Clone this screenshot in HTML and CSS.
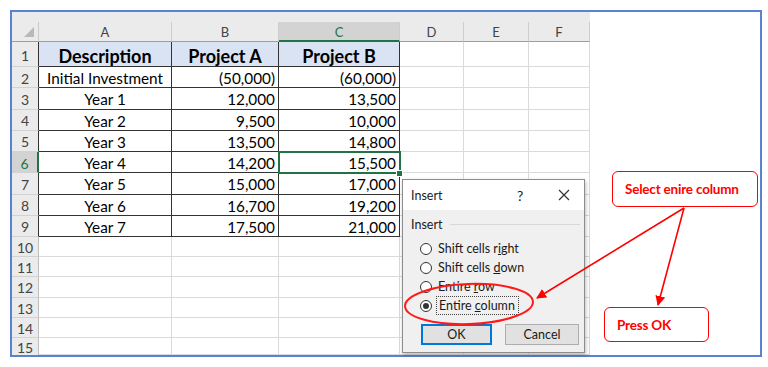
FILE: index.html
```html
<!DOCTYPE html>
<html>
<head>
<meta charset="utf-8">
<link rel="stylesheet" href="styles.css">
</head>
<body>
<div class="frame">
  <div class="sheet">
    <div class="strip"></div>
    <div class="corner"><svg width="14" height="14" viewBox="0 0 14 14"><polygon points="2,12 12,12 12,2" fill="#b9b9b9"/></svg></div>
    <div class="ch">A</div><div class="ch">B</div><div class="ch csel">C</div><div class="ch">D</div><div class="ch">E</div><div class="ch">F</div>

    <div class="rh t">1</div><div class="d h">Description</div><div class="d h">Project A</div><div class="d h">Project B</div><div class="c"></div><div class="c"></div><div class="c"></div>
    <div class="rh t">2</div><div class="d">Initial Investment</div><div class="d r">(50,000)</div><div class="d r">(60,000)</div><div class="c"></div><div class="c"></div><div class="c"></div>
    <div class="rh t">3</div><div class="d">Year 1</div><div class="d r">12,000</div><div class="d r">13,500</div><div class="c"></div><div class="c"></div><div class="c"></div>
    <div class="rh t">4</div><div class="d">Year 2</div><div class="d r">9,500</div><div class="d r">10,000</div><div class="c"></div><div class="c"></div><div class="c"></div>
    <div class="rh t">5</div><div class="d">Year 3</div><div class="d r">13,500</div><div class="d r">14,800</div><div class="c"></div><div class="c"></div><div class="c"></div>
    <div class="rh t rsel">6</div><div class="d">Year 4</div><div class="d r">14,200</div><div class="d r">15,500</div><div class="c"></div><div class="c"></div><div class="c"></div>
    <div class="rh t">7</div><div class="d">Year 5</div><div class="d r">15,000</div><div class="d r">17,000</div><div class="c"></div><div class="c"></div><div class="c"></div>
    <div class="rh t">8</div><div class="d">Year 6</div><div class="d r">16,700</div><div class="d r">19,200</div><div class="c"></div><div class="c"></div><div class="c"></div>
    <div class="rh t">9</div><div class="d">Year 7</div><div class="d r">17,500</div><div class="d r">21,000</div><div class="c"></div><div class="c"></div><div class="c"></div>
    <div class="rh">10</div><div class="c"></div><div class="c"></div><div class="c"></div><div class="c"></div><div class="c"></div><div class="c"></div>
    <div class="rh">11</div><div class="c"></div><div class="c"></div><div class="c"></div><div class="c"></div><div class="c"></div><div class="c"></div>
    <div class="rh">12</div><div class="c"></div><div class="c"></div><div class="c"></div><div class="c"></div><div class="c"></div><div class="c"></div>
    <div class="rh">13</div><div class="c"></div><div class="c"></div><div class="c"></div><div class="c"></div><div class="c"></div><div class="c"></div>
    <div class="rh">14</div><div class="c"></div><div class="c"></div><div class="c"></div><div class="c"></div><div class="c"></div><div class="c"></div>
    <div class="rh last">15</div><div class="c"></div><div class="c"></div><div class="c"></div><div class="c"></div><div class="c"></div><div class="c"></div>
  </div>
  <div class="blank"></div>
</div>

<div class="selbox"></div>
<div class="handle"></div>

<div class="dialog">
  <div class="titlebar">
    <span class="title">Insert</span>
    <span class="help">?</span>
    <svg class="close" width="12" height="12" viewBox="0 0 12 12"><path d="M1 1 L11 11 M11 1 L1 11" stroke="#333" stroke-width="1.2" fill="none"/></svg>
  </div>
  <div class="dbody">
    <div class="group"><span>Insert</span><i class="rule"></i></div>
    <div class="radios">
      <div class="opt"><span class="radio"></span><span>Shift cells r<u>i</u>ght</span></div>
      <div class="opt"><span class="radio"></span><span>Shift cells <u>d</u>own</span></div>
      <div class="opt"><span class="radio"></span><span>Entire <u>r</u>ow</span></div>
      <div class="opt"><span class="radio on"></span><span class="focus">Entire <u>c</u>olumn</span></div>
    </div>
    <div class="buttons">
      <div class="btn ok">OK</div>
      <div class="btn cancel">Cancel</div>
    </div>
  </div>
</div>

<div class="callout c1">Select enire column</div>
<div class="callout c2">Press OK</div>

<svg class="marks" width="768" height="367" viewBox="0 0 768 367">
  <defs>
    <marker id="ah" markerWidth="10" markerHeight="10" refX="9" refY="5" orient="auto" markerUnits="userSpaceOnUse">
      <path d="M0,0 L10,5 L0,10 z" fill="#ff0000"/>
    </marker>
  </defs>
  <ellipse cx="469" cy="304" rx="64" ry="20" fill="none" stroke="#ff1a1a" stroke-width="2" transform="rotate(-2 469 304)"/>
  <line x1="684" y1="208" x2="537" y2="298" stroke="#ff0000" stroke-width="1.6" marker-end="url(#ah)"/>
  <line x1="684" y1="208" x2="658" y2="305" stroke="#ff0000" stroke-width="1.6" marker-end="url(#ah)"/>
</svg>
</body>
</html>
```
FILE: styles.css
```css
html, body {
  margin: 0;
  padding: 0;
  background: #ffffff;
}
body {
  width: 768px;
  height: 367px;
  position: relative;
  overflow: hidden;
  font-family: Lato, "Liberation Sans", sans-serif;
}
.frame {
  margin: 10px 0 0 10px;
  width: 752px;
  height: 347px;
  box-sizing: border-box;
  border: 2px solid #5b82d0;
  display: flex;
  overflow: hidden;
}
.sheet {
  width: 578px;
  flex: none;
  display: grid;
  grid-template-columns: 27px 133px 107px 121px 64px 65px 61px;
  grid-template-rows: 10px 20px 25px repeat(8, 21.25px) repeat(5, 20.2px) 1fr;
  color: #000;
}
.blank { flex: 1; background: #fff; }
.sheet > div {
  box-sizing: border-box;
  border-right: 1px solid #dadada;
  border-bottom: 1px solid #dadada;
  display: flex;
  align-items: center;
  justify-content: center;
  overflow: hidden;
  white-space: nowrap;
}
.sheet > .strip {
  grid-column: 1 / -1;
  background: #ebebeb;
  border: none;
}
.sheet > .corner {
  background: #ebebeb;
  border-right: 1px solid #c9c9c9;
  border-bottom: 1px solid #9e9e9e;
  justify-content: flex-end;
  align-items: flex-end;
  padding: 0 2px 2px 0;
}
.corner svg { display: block; }
.sheet > .ch {
  background: #ebebeb;
  border-right: 1px solid #cdcdcd;
  border-bottom: 1px solid #9e9e9e;
  font-size: 13px;
  color: #444;
  padding-top: 1px;
}
.sheet > .ch.csel {
  background: #d3d3d3;
  color: #217346;
  border-bottom: 2px solid #217346;
}
.sheet > .rh {
  background: #ebebeb;
  border-right: 1px solid #bdbdbd;
  border-bottom: 1px solid #d2d2d2;
  font-size: 14px;
  color: #444;
  padding-top: 2px;
}
.sheet > .rh.t { border-right: 1px solid #333; }
.sheet > .rh.rsel {
  background: #d3d3d3;
  color: #217346;
  border-right: 2px solid #217346;
}
.sheet > .rh.last { border-bottom: none; }
.sheet > .d {
  border-right: 1px solid #333;
  border-bottom: 1px solid #333;
  font-size: 15.3px;
  padding-top: 2px;
}
.sheet > .d.r {
  justify-content: flex-end;
  padding-right: 3px;
}
.sheet > .d.h {
  background: #dae3f3;
  font-weight: 700;
  font-size: 18px;
  padding-top: 3px;
}
.selbox {
  position: absolute;
  left: 278px;
  top: 151px;
  width: 123px;
  height: 23px;
  box-sizing: border-box;
  border: 2px solid #217346;
}
.handle {
  position: absolute;
  left: 396px;
  top: 170px;
  width: 7px;
  height: 7px;
  box-sizing: border-box;
  background: #217346;
  border: 1px solid #fff;
}
.dialog {
  position: absolute;
  left: 402px;
  top: 179px;
  width: 183px;
  height: 174px;
  box-sizing: border-box;
  border: 1px solid #8c8c8c;
  box-shadow: 1px 2px 4px rgba(0,0,0,0.25);
  background: #f0f0f0;
  display: flex;
  flex-direction: column;
  font-family: Lato, "Noto Sans", sans-serif;
  font-size: 12.5px;
  color: #1a1a1a;
}
.titlebar {
  height: 30px;
  background: #fff;
  display: flex;
  align-items: center;
  padding-left: 8px;
  flex: none;
}
.title { width: 105px; }
.help { width: 40px; font-size: 14px; padding-left: 1px; }
.close { margin-left: 1px; }
.dbody {
  padding: 4px 4px 0 8px;
  display: flex;
  flex-direction: column;
}
.group {
  height: 20px;
  display: flex;
  align-items: center;
}
.rule {
  flex: 1;
  height: 1px;
  background: #d8d8d8;
  margin-left: 8px;
}
.radios {
  padding: 5px 0 0 9px;
  display: flex;
  flex-direction: column;
}
.opt {
  height: 19px;
  display: flex;
  align-items: center;
  gap: 6px;
}
.radio {
  width: 12px;
  height: 12px;
  box-sizing: border-box;
  border: 1px solid #333;
  border-radius: 50%;
  background: #fff;
  display: flex;
  align-items: center;
  justify-content: center;
}
.radio.on::after {
  content: "";
  width: 6px;
  height: 6px;
  border-radius: 50%;
  background: #333;
}
.focus {
  outline: 1px dotted #444;
  outline-offset: 1px;
  padding: 0 2px 0 1px;
}
.buttons {
  display: flex;
  gap: 13px;
  margin: 9px 0 0 10px;
}
.btn {
  height: 21px;
  box-sizing: border-box;
  background: #e1e1e1;
  display: flex;
  align-items: center;
  justify-content: center;
}
.btn.ok { width: 71px; border: 2px solid #0078d7; }
.btn.cancel { width: 74px; border: 1px solid #adadad; }
.callout {
  position: absolute;
  box-sizing: border-box;
  border: 1.5px solid #ff0000;
  border-radius: 6px;
  background: #fff;
  color: #ff0000;
  font-family: Lato, "Liberation Sans", sans-serif;
  font-weight: 700;
  font-size: 13.5px;
  letter-spacing: -0.2px;
  display: flex;
  align-items: center;
  padding-left: 12px;
}
.c1 { left: 612px; top: 171px; width: 146px; height: 36px; }
.c2 { left: 604px; top: 307px; width: 105px; height: 35px; }
.marks {
  position: absolute;
  left: 0;
  top: 0;
  pointer-events: none;
}
```
